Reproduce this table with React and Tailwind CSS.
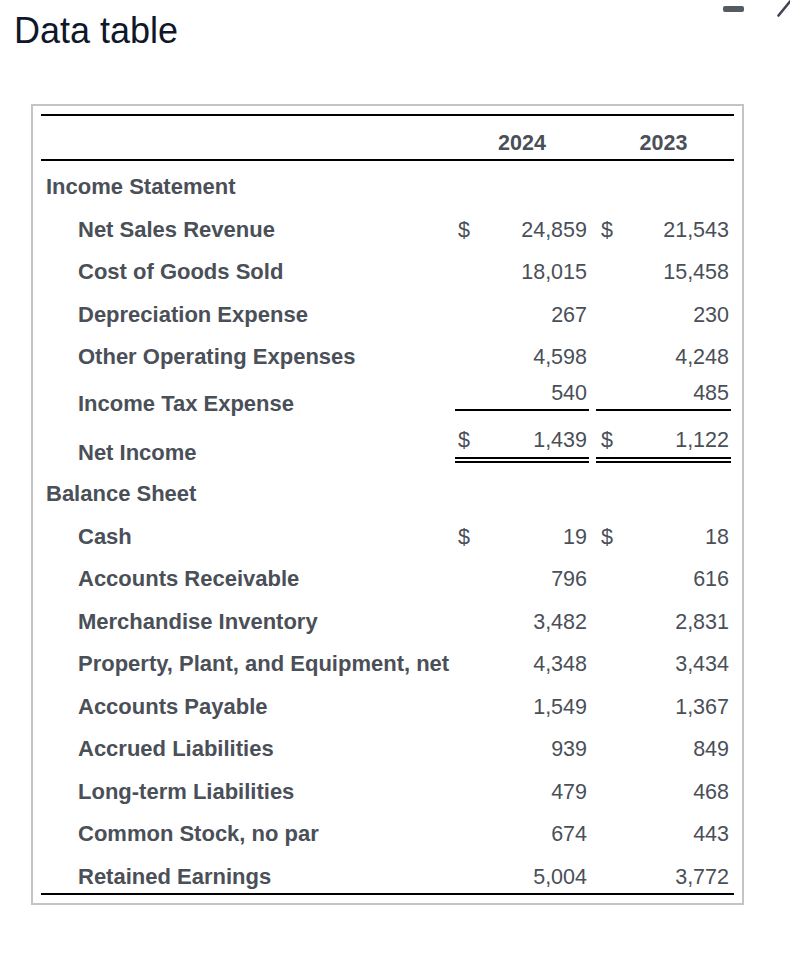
const font = { fontFamily: '"Liberation Sans", Arial, sans-serif' };

const income = [
  ["Net Sales Revenue", "24,859", "21,543", true],
  ["Cost of Goods Sold", "18,015", "15,458"],
  ["Depreciation Expense", "267", "230"],
  ["Other Operating Expenses", "4,598", "4,248"],
];

const balance = [
  ["Cash", "19", "18", true],
  ["Accounts Receivable", "796", "616"],
  ["Merchandise Inventory", "3,482", "2,831"],
  ["Property, Plant, and Equipment, net", "4,348", "3,434"],
  ["Accounts Payable", "1,549", "1,367"],
  ["Accrued Liabilities", "939", "849"],
  ["Long-term Liabilities", "479", "468"],
  ["Common Stock, no par", "674", "443"],
];

function Num({ value, dollar, first }) {
  return (
    <div className={`flex justify-between pr-[2px] ${first ? "pl-[3px]" : "pl-[5px]"}`}>
      <span>{dollar ? "$" : ""}</span>
      <span>{value}</span>
    </div>
  );
}

function Row({ label, a, b, dollar, section, h = "h-[42.5px]" }) {
  return (
    <div className={`flex ${h} pt-[9px]`}>
      <div className={`w-[414px] shrink-0 text-[22px] font-bold ${section ? "pl-[5px]" : "pl-[37px]"}`}>{label}</div>
      <div className="w-[134px] shrink-0">
        {a !== undefined && <Num value={a} dollar={dollar} first />}
      </div>
      <div className="w-[7px] shrink-0" />
      <div className="w-[135px] shrink-0">
        {b !== undefined && <Num value={b} dollar={dollar} />}
      </div>
    </div>
  );
}

export default function App() {
  return (
    <div className="w-[790px] h-[956px] bg-white overflow-hidden" style={font}>
      <div className="flex h-[104px]">
        <h1 className="pl-[14px] pt-[13px] text-[36px] leading-none text-[#0f172a]">Data table</h1>
        <div className="ml-auto flex items-start">
          <div className="mt-[6px] w-[21px] h-[6px] shrink-0 rounded-[2px] bg-[#555b63]" />
          <svg className="ml-[33px] shrink-0" width="13" height="17" viewBox="0 0 13 17">
            <path d="M1.5 15.5 L13 1.5" stroke="#3f4652" strokeWidth="2.6" strokeLinecap="round" fill="none" />
          </svg>
        </div>
      </div>

      <div className="ml-[31px] w-[713px] border-2 border-[#c4c4c4] p-2">
        <div className="border-t-2 border-b-2 border-black text-[21.5px] leading-6 text-[#4a4f58]">
          <div className="flex h-[45px] border-b-2 border-black pt-[15px] font-bold">
            <div className="w-[414px] shrink-0" />
            <div className="w-[134px] shrink-0 text-center">2024</div>
            <div className="w-[7px] shrink-0" />
            <div className="w-[135px] shrink-0 text-center">2023</div>
          </div>
          <div className="h-[5px]" />

          <Row label="Income Statement" section />
          {income.map(([label, a, b, d]) => (
            <Row key={label} label={label} a={a} b={b} dollar={d} />
          ))}

          <div className="flex h-[32.5px]">
            <div className="w-[414px] shrink-0 pl-[37px] pt-[13.5px] text-[22px] font-bold">Income Tax Expense</div>
            <div className="w-[134px] shrink-0 border-b-2 border-black pt-[2.5px]">
              <Num value="540" first />
            </div>
            <div className="w-[7px] shrink-0" />
            <div className="w-[135px] shrink-0 border-b-2 border-black pt-[2.5px]">
              <Num value="485" />
            </div>
          </div>

          <div className="flex h-[52px]">
            <div className="w-[414px] shrink-0 pl-[37px] pt-[30px] text-[22px] font-bold">Net Income</div>
            <div className="w-[134px] shrink-0 border-b-[6px] border-double border-black pt-[17px]">
              <Num value="1,439" dollar first />
            </div>
            <div className="w-[7px] shrink-0" />
            <div className="w-[135px] shrink-0 border-b-[6px] border-double border-black pt-[17px]">
              <Num value="1,122" dollar />
            </div>
          </div>
          <div className="h-[10px]" />

          <Row label="Balance Sheet" section />
          {balance.map(([label, a, b, d]) => (
            <Row key={label} label={label} a={a} b={b} dollar={d} />
          ))}
          <Row label="Retained Earnings" a="5,004" b="3,772" h="h-[37.5px]" />
        </div>
      </div>
    </div>
  );
}
